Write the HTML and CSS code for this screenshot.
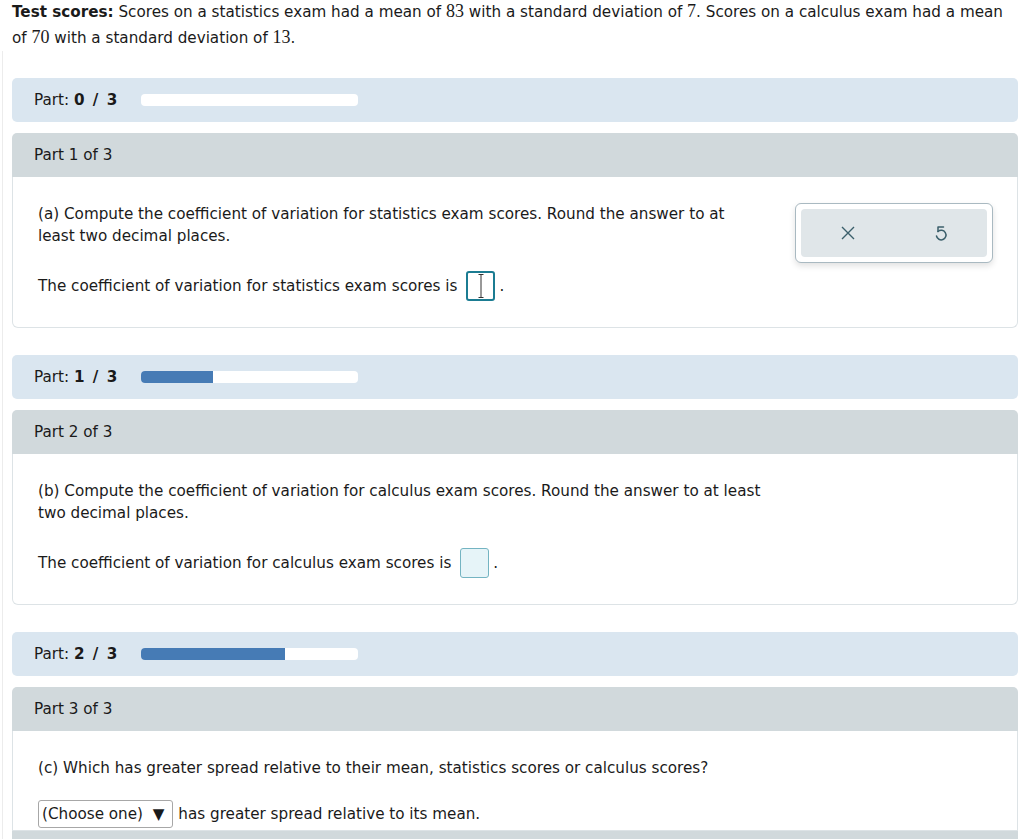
FILE: index.html
```html
<!DOCTYPE html>
<html>
<head>
<meta charset="utf-8">
<link rel="stylesheet" href="styles.css">
</head>
<body>
<p class="stem"><b>Test scores:</b> Scores on a statistics exam had a mean of <span class="m">83</span> with a standard deviation of <span class="m">7</span>. Scores on a calculus exam had a mean<br>of <span class="m">70</span> with a standard deviation of <span class="m">13</span>.</p>
<div class="page">

  <div class="progress"><span class="label">Part: <b>0 / 3</b></span><div class="track"><div class="fill" style="width:0%"></div></div></div>
  <div class="part">
    <div class="part-head">Part 1 of 3</div>
    <div class="part-body">
      <div class="q">
        <p class="text">(a) Compute the coefficient of variation for statistics exam scores. Round the answer to at least two decimal places.</p>
        <div class="answer">The coefficient of variation for statistics exam scores is <span class="box active"><svg width="10" height="26" viewBox="0 0 10 26"><path d="M2.5 1.5h5M5 1.5v23M2.5 24.5h5" stroke="#333" stroke-width="1" fill="none"/></svg></span>.</div>
      </div>
      <div class="tools">
        <div class="tools-in">
          <button class="tool"><svg width="16" height="16" viewBox="0 0 16 16"><path d="M2 2l12 12M14 2L2 14" stroke="#3b5f6b" stroke-width="1.4" fill="none"/></svg></button>
          <button class="tool"><svg width="15" height="17" viewBox="0 0 15 17"><path d="M10.5 2H5V6.5" stroke="#3b5f6b" stroke-width="1.5" fill="none" stroke-linecap="round" stroke-linejoin="round"/><path d="M5 6.5A4.8 4.8 0 1 1 3.5 11" stroke="#3b5f6b" stroke-width="1.5" fill="none" stroke-linecap="round"/></svg></button>
        </div>
      </div>
    </div>
  </div>

  <div class="progress"><span class="label">Part: <b>1 / 3</b></span><div class="track"><div class="fill" style="width:33%"></div></div></div>
  <div class="part">
    <div class="part-head">Part 2 of 3</div>
    <div class="part-body">
      <div class="q">
        <p class="text">(b) Compute the coefficient of variation for calculus exam scores. Round the answer to at least two decimal places.</p>
        <div class="answer">The coefficient of variation for calculus exam scores is <span class="box"></span>.</div>
      </div>
    </div>
  </div>

  <div class="progress"><span class="label">Part: <b>2 / 3</b></span><div class="track"><div class="fill" style="width:66.5%"></div></div></div>
  <div class="part">
    <div class="part-head">Part 3 of 3</div>
    <div class="part-body last">
      <div class="q wide">
        <p class="text">(c) Which has greater spread relative to their mean, statistics scores or calculus scores?</p>
        <div class="answer choose"><span class="select">(Choose one)&nbsp; ▼</span> has greater spread relative to its mean.</div>
      </div>
    </div>
    <div class="part-foot"></div>
  </div>

</div>
</body>
</html>
```

FILE: styles.css
```css
html, body {
  margin: 0;
  padding: 0;
  background: #fff;
  overflow: hidden;
}
body {
  font-family: "DejaVu Sans", Verdana, sans-serif;
  font-size: 15.2px;
  color: #1a1a1a;
}
.stem {
  margin: -1px 0 0 0;
  padding: 0 6px 0 12px;
  line-height: 26px;
}
.m {
  font-family: "Liberation Serif", "Times New Roman", serif;
  font-size: 18px;
  line-height: 1;
}
.page {
  margin-left: 2px;
  border-left: 1px solid #ececec;
  padding: 27px 6px 0 9px;
}
.progress {
  height: 44px;
  background: #dae6f0;
  border-radius: 5px;
  display: flex;
  align-items: center;
  padding-left: 22px;
  margin-bottom: 11px;
}
.label {
  width: 107px;
}
.label b {
  word-spacing: 3px;
}
.track {
  width: 217px;
  height: 12px;
  background: #fff;
  border-radius: 4px;
  overflow: hidden;
}
.fill {
  height: 100%;
  background: #467bb5;
}
.part {
  margin-bottom: 27px;
}
.part-head {
  height: 44px;
  background: #d1d9dc;
  border-radius: 5px 5px 0 0;
  display: flex;
  align-items: center;
  padding-left: 22px;
}
.part-body {
  border: 1px solid #dde3e6;
  border-top: none;
  border-radius: 0 0 6px 6px;
  padding: 26px 24px 26px 25px;
  display: flex;
  justify-content: space-between;
  align-items: flex-start;
}
.part-body.last {
  border-radius: 0;
  padding-bottom: 2px;
}
.part-foot {
  height: 10px;
  background: #d1d9dc;
}
.q {
  width: 727px;
}
.q.wide {
  width: 900px;
}
.text {
  margin: 0;
  line-height: 22px;
}
.answer {
  margin-top: 24px;
  display: flex;
  align-items: center;
  height: 30px;
}
.answer.choose {
  margin-top: 21px;
  height: 28px;
}
.box {
  display: inline-flex;
  align-items: center;
  justify-content: center;
  box-sizing: border-box;
  width: 29px;
  height: 30px;
  margin: 0 4px 0 9px;
  border: 1.5px solid #74b4c2;
  border-radius: 3px;
  background: #e6f4f8;
}
.box.active {
  border: 2px solid #1b7c92;
  background: #fff;
}
.select {
  display: inline-flex;
  align-items: center;
  box-sizing: border-box;
  height: 28px;
  padding: 0 8px 0 3px;
  border: 1px solid #a7a7a7;
  border-radius: 3px;
  margin-right: 5px;
}
.tools {
  width: 186px;
  height: 48px;
  border: 1px solid #a9b9c1;
  border-radius: 6px;
  background: #fff;
  box-shadow: 0 3px 6px rgba(0, 0, 0, 0.12);
  padding: 5px;
}
.tools-in {
  height: 48px;
  width: 186px;
  background: #e0e6e9;
  border-radius: 4px;
  display: flex;
}
.tool {
  flex: 1;
  border: none;
  background: transparent;
  display: flex;
  align-items: center;
  justify-content: center;
  padding: 0;
}
```
